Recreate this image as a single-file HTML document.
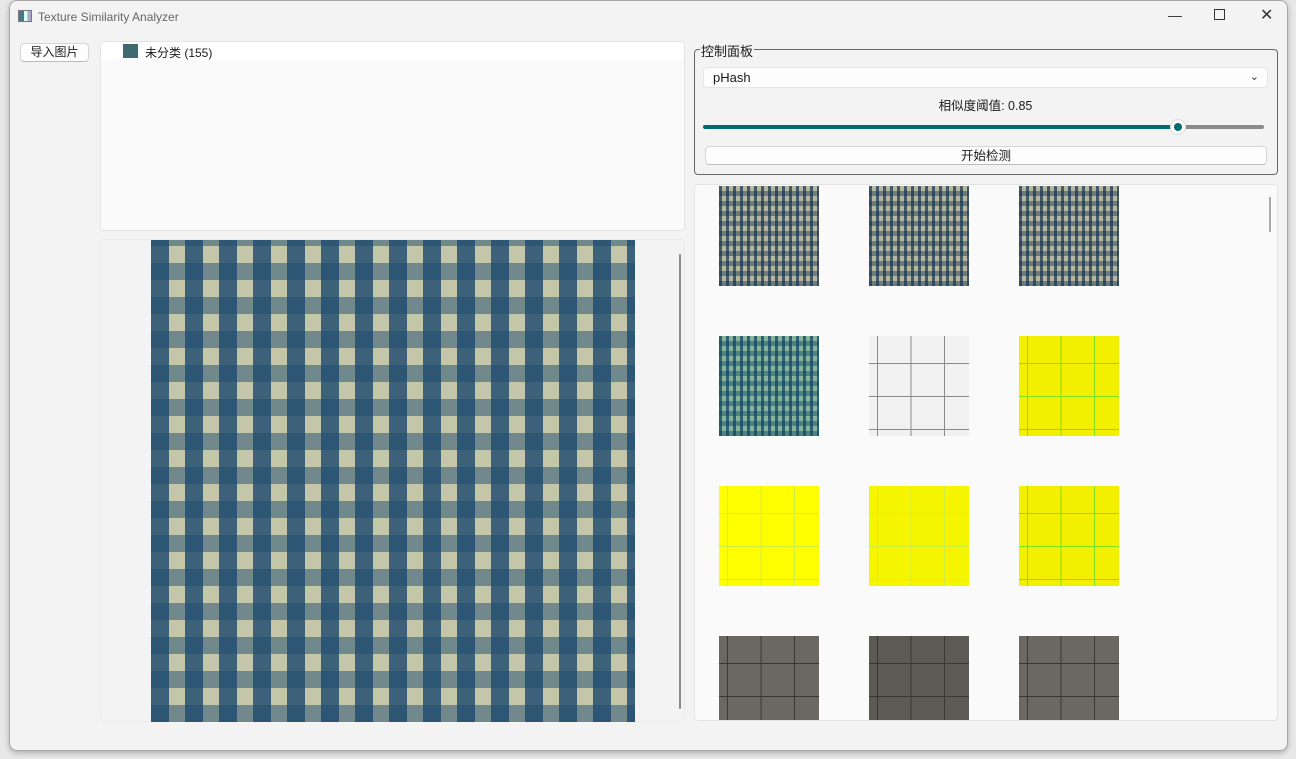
<!DOCTYPE html>
<html><head><meta charset="utf-8"><style>
*{box-sizing:border-box;margin:0;padding:0}
body{width:1296px;height:759px;background:#e8e8e8;font-family:"Liberation Sans","Noto Sans CJK SC",sans-serif;font-size:12px;color:#1a1a1a;position:relative;overflow:hidden}
.win{position:absolute;left:9px;top:0;width:1279px;height:751px;background:#f3f3f3;border:1px solid #a8a8a8;border-radius:8px;box-shadow:0 2px 6px rgba(0,0,0,.25);overflow:hidden}
.title{position:absolute;left:28px;top:9px;font-size:12px;color:#666}
.ticon{position:absolute;left:8px;top:9px;width:14px;height:12px;border:1px solid #777;background:linear-gradient(90deg,#4a7a8a 0 40%,#dfe 40% 70%,#aac 70%)}
.ctl{position:absolute;top:6px;color:#333;font-size:14px}
.btn{position:absolute;background:#fdfdfd;border:1px solid #d6d6d6;border-bottom-color:#bcbcbc;border-radius:4px;text-align:center}
.panel{position:absolute;background:#fafafa;border:1px solid #e4e4e4;border-radius:4px}
.ging{background-color:#c4c6aa;background-image:
 repeating-linear-gradient(90deg,rgba(30,75,110,.82) 0 18px,transparent 18px 34px),
 repeating-linear-gradient(0deg,rgba(30,75,110,.5) 0 17px,transparent 17px 34px);}
.th{position:absolute;width:100px;height:100px}
.g1{background-color:#b4b69e;background-image:repeating-linear-gradient(90deg,rgba(20,50,80,.7) 0 3px,transparent 3px 7px),repeating-linear-gradient(0deg,rgba(20,50,80,.45) 0 5px,transparent 5px 10px)}
.g2{background-color:#86b39a;background-image:repeating-linear-gradient(90deg,rgba(15,70,100,.75) 0 3px,transparent 3px 7px),repeating-linear-gradient(0deg,rgba(15,70,100,.45) 0 5px,transparent 5px 10px)}
.br{background-image:repeating-linear-gradient(90deg,transparent 0 8px,var(--l) 8px 9px,transparent 9px 33.5px),repeating-linear-gradient(0deg,transparent 0 6px,var(--l) 6px 7px,transparent 7px 33px)}
.white{background-color:#f1f1f1;--l:#8a8a8a}
.yel{background-color:#f3ef00;--l:#7de020}
.yel2{background-color:#ffff00;--l:#d0ee40}
.gray{background-color:#6b6762;--l:#3a3835}
</style></head><body>
<div class="win">
 <div class="ticon"></div><div class="title">Texture Similarity Analyzer</div>
 <div class="ctl" style="left:1158px">&#8212;</div>
 <div class="ctl" style="left:1204px;top:8px;width:11px;height:11px;border:1px solid #333"></div>
 <div class="ctl" style="left:1250px;font-size:16px;top:4px">&#10005;</div>

 <div class="btn" style="left:10px;top:42px;width:69px;height:19px;line-height:17px">导入图片</div>
 <div class="panel" style="left:90px;top:40px;width:585px;height:190px">
  <div style="height:18px;background:#fff;border-radius:3px"></div>
  <div style="position:absolute;left:22px;top:2px;width:15px;height:14px;background:#3f6b70"></div>
  <div style="position:absolute;left:44px;top:2px">未分类 (155)</div>
 </div>
 <div class="panel" style="left:90px;top:238px;width:585px;height:483px;background:#f3f3f3;border-color:#ebebeb">
  <div class="ging" style="position:absolute;left:50px;top:0;width:484px;height:482px"></div>
  <div style="position:absolute;left:578px;top:14px;width:2px;height:455px;background:#8a8a8a;border-radius:1px"></div>
 </div>

 <div style="position:absolute;left:684px;top:48px;width:584px;height:126px;border:1px solid #666;border-radius:4px"></div>
 <div style="position:absolute;left:690px;top:40px;padding:0 1px;background:#f3f3f3;font-size:13px">控制面板</div>
 <div class="btn" style="left:693px;top:66px;width:565px;height:21px;text-align:left;padding-left:9px;line-height:20px;font-size:13px;border-color:#e5e5e5">pHash<span style="position:absolute;right:8px;top:-1px;font-size:11px;color:#333">&#8964;</span></div>
 <div style="position:absolute;left:693px;top:94px;width:565px;text-align:center;font-size:12.5px">相似度阈值: 0.85</div>
 <div style="position:absolute;left:693px;top:124px;width:477px;height:4px;background:#006a71;border-radius:2px"></div>
 <div style="position:absolute;left:1170px;top:124px;width:84px;height:4px;background:#8a8a8a;border-radius:2px"></div>
 <div style="position:absolute;left:1160px;top:118px;width:16px;height:16px;border-radius:50%;background:#fff;border:1px solid #ddd"><div style="margin:3px;width:8px;height:8px;border-radius:50%;background:#006a71"></div></div>
 <div class="btn" style="left:695px;top:145px;width:562px;height:19px;line-height:18px;font-size:12.5px">开始检测</div>

 <div class="panel" style="left:684px;top:183px;width:584px;height:537px;overflow:hidden">
  <div style="position:absolute;left:574px;top:12px;width:2px;height:35px;background:#aaa"></div>
  <div class="th g1" style="left:24px;top:1px"></div>
  <div class="th g1" style="left:174px;top:1px"></div>
  <div class="th g1" style="left:324px;top:1px"></div>
  <div class="th g2" style="left:24px;top:151px"></div>
  <div class="th br white" style="left:174px;top:151px"></div>
  <div class="th br yel" style="left:324px;top:151px"></div>
  <div class="th br yel2" style="left:24px;top:301px"></div>
  <div class="th br yel2" style="left:174px;top:301px;background-color:#f5f500"></div>
  <div class="th br yel" style="left:324px;top:301px"></div>
  <div class="th br gray" style="left:24px;top:451px"></div>
  <div class="th br gray" style="left:174px;top:451px;background-color:#5d5955"></div>
  <div class="th br gray" style="left:324px;top:451px"></div>
 </div>
</div>
</body></html>
